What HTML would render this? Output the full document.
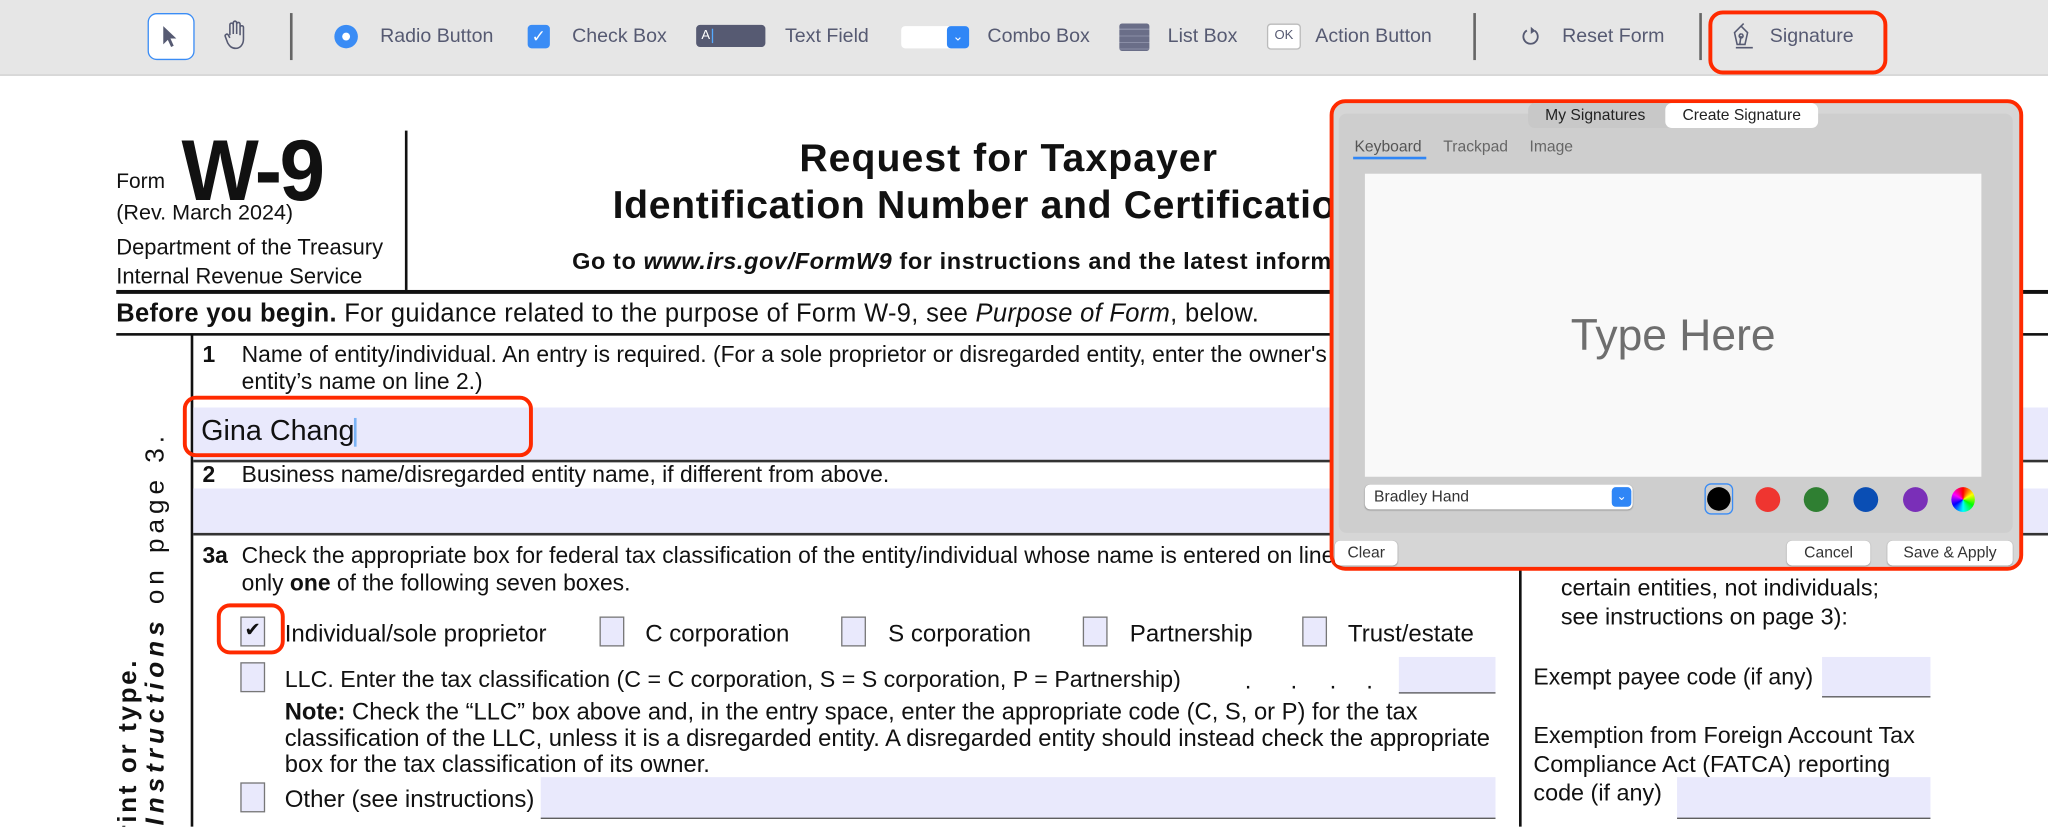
<!DOCTYPE html>
<html><head><meta charset="utf-8"><style>
html,body{margin:0;padding:0;width:2048px;height:826px;overflow:hidden;background:#fff}
#w{position:absolute;left:0;top:0;width:1568px;height:633px;overflow:hidden;transform:scale(1.30612);transform-origin:0 0;font-family:"Liberation Sans",Arial,sans-serif;color:#111}
.a{position:absolute;white-space:nowrap}
.tb{color:#565a72;font-size:15px}
.f{font-size:17.5px;color:#111}
.g{font-size:18.4px}
.r{font-size:17.9px}
.fld{position:absolute;background:#e9e9fc}
.cb{position:absolute;width:19px;height:23px;background:#e9e9fc;border:1.5px solid #777;box-sizing:border-box}
.dot{position:absolute;width:19px;height:19px;border-radius:50%}
.btn{position:absolute;background:#fff;border-radius:4px;font-size:12px;color:#333;text-align:center;line-height:19px;height:19px;box-shadow:0 0.5px 1px rgba(0,0,0,.25)}
</style></head><body><div id="w">
<!-- toolbar -->
<div class="a" style="left:0;top:0;width:1568px;height:57px;background:#e6e6e6;border-bottom:1px solid #cfcfcf"></div>
<div class="a" style="left:113px;top:10px;width:34px;height:34px;background:#fff;border:1.5px solid #3a8cf5;border-radius:7px"></div>
<svg class="a" style="left:122px;top:18px" width="16" height="20" viewBox="0 0 16 20"><path d="M3 2 L3 16 L6.5 12.5 L9 18 L11 17 L8.5 11.5 L13 11.5 Z" fill="#565a72"/></svg>
<svg class="a" style="left:171px;top:15px" width="18" height="24" viewBox="0 0 18 24"><path d="M5 12 V4 a1.3 1.3 0 0 1 2.6 0 V11 V2.5 a1.3 1.3 0 0 1 2.6 0 V11 V3.5 a1.3 1.3 0 0 1 2.6 0 V12 V6 a1.3 1.3 0 0 1 2.6 0 V15 c0 4-2.5 7-6 7 c-3 0-4.5-1.5-6-4 L1.5 13 a1.3 1.3 0 0 1 2.3-1.2 L5 14" fill="none" stroke="#565a72" stroke-width="1.2"/></svg>
<div class="a" style="left:222px;top:10px;width:1.5px;height:36px;background:#666"></div>
<div class="a" style="left:256px;top:19px;width:18px;height:18px;border-radius:50%;background:#3a8cf5"></div>
<div class="a" style="left:262px;top:25px;width:6px;height:6px;border-radius:50%;background:#fff"></div>
<div class="a tb" style="left:291px;top:19px">Radio Button</div>
<div class="a" style="left:404px;top:19px;width:17px;height:18px;border-radius:3px;background:#3a8cf5;color:#fff;font-size:13px;text-align:center;line-height:18px">✓</div>
<div class="a tb" style="left:438px;top:19px">Check Box</div>
<div class="a" style="left:533px;top:19px;width:53px;height:17px;border-radius:3px;background:#565a72;color:#fff;font-size:10px;line-height:17px;padding-left:4px;box-sizing:border-box">A<span style="display:inline-block;width:1px;height:11px;background:#5af;vertical-align:middle;margin-left:1px"></span></div>
<div class="a tb" style="left:601px;top:19px">Text Field</div>
<div class="a" style="left:690px;top:20px;width:52px;height:17px;border-radius:3px;background:#fff"></div>
<div class="a" style="left:725px;top:20px;width:17px;height:17px;border-radius:3px;background:#2f86f6;color:#fff;font-size:10px;text-align:center;line-height:17px">⌄</div>
<div class="a tb" style="left:756px;top:19px">Combo Box</div>
<div class="a" style="left:857px;top:18px;width:23px;height:21px;border-radius:2px;background:repeating-linear-gradient(#6a6e88 0,#6a6e88 4px,#8a8ea6 4px,#8a8ea6 5px)"></div>
<div class="a tb" style="left:894px;top:19px">List Box</div>
<div class="a" style="left:970px;top:18px;width:24px;height:18px;border:1px solid #bbb;border-radius:3px;background:#fff;font-size:10px;color:#565a72;text-align:center;line-height:18px">OK</div>
<div class="a tb" style="left:1007px;top:19px">Action Button</div>
<div class="a" style="left:1128px;top:10px;width:1.5px;height:36px;background:#666"></div>
<svg class="a" style="left:1163px;top:19px" width="18" height="18" viewBox="0 0 18 18"><path d="M12 4.5 A5.5 5.5 0 1 1 6 4.3" fill="none" stroke="#565a72" stroke-width="1.4"/><path d="M9 1.5 L12.5 4.5 L9 7 Z" fill="#565a72"/></svg>
<div class="a tb" style="left:1196px;top:19px">Reset Form</div>
<div class="a" style="left:1301px;top:10px;width:1.5px;height:36px;background:#666"></div>
<div class="a" style="left:1308px;top:8px;width:131px;height:43px;border:3px solid #ff2a00;border-radius:11px"></div>
<svg class="a" style="left:1324px;top:17px" width="20" height="22" viewBox="0 0 20 22"><path d="M6 17 L4 8 L9 3 L14 8 L12 17 Z M9 3 L11 1 M9 9 a1.5 1.5 0 1 0 0.1 0 M9 10.5 L8 17 M5 19.5 H18" fill="none" stroke="#565a72" stroke-width="1.2"/></svg>
<div class="a tb" style="left:1355px;top:19px">Signature</div>

<!-- form header -->
<div class="a" style="left:89px;top:131px;font-size:16px">Form</div>
<div class="a" style="left:139px;top:92px;font-size:66px;font-weight:bold;letter-spacing:-2px;transform:scaleX(0.95);transform-origin:0 0">W-9</div>
<div class="a" style="left:89px;top:154px;font-size:16.5px">(Rev. March 2024)</div>
<div class="a" style="left:89px;top:180px;font-size:16.8px">Department of the Treasury</div>
<div class="a" style="left:89px;top:202px;font-size:16.8px">Internal Revenue Service</div>
<div class="a" style="left:310px;top:100px;width:2px;height:122px;background:#111"></div>
<div class="a" style="left:612px;top:105px;font-size:30px;font-weight:bold;letter-spacing:0.8px">Request for Taxpayer</div>
<div class="a" style="left:469px;top:141px;font-size:30px;font-weight:bold;letter-spacing:0.5px">Identification Number and Certification</div>
<div class="a" style="left:438px;top:190px;font-size:18px;font-weight:bold;letter-spacing:0.45px">Go to <i>www.irs.gov/FormW9</i> for instructions and the latest information.</div>
<div class="a" style="left:89px;top:222px;width:1479px;height:2.5px;background:#111"></div>
<div class="a" style="left:89px;top:229px;font-size:19.5px;letter-spacing:0.25px"><b>Before you begin.</b> For guidance related to the purpose of Form W-9, see <i>Purpose of Form</i>, below.</div>
<div class="a" style="left:89px;top:255px;width:1479px;height:1.5px;background:#111"></div>
<div class="a" style="left:146px;top:256px;width:1.5px;height:377px;background:#111"></div>

<div class="a f" style="left:155px;top:261px"><b>1</b></div>
<div class="a f" style="left:185px;top:261px">Name of entity/individual. An entry is required. (For a sole proprietor or disregarded entity, enter the owner's name on line 1, and enter the business/disregarded</div>
<div class="a f" style="left:185px;top:282px">entity’s name on line 2.)</div>
<div class="fld" style="left:148px;top:312px;width:1420px;height:40px"></div>
<div class="a" style="left:154px;top:317px;font-size:22px">Gina Chang<span style="display:inline-block;width:2px;height:22px;background:#7ab3f5;vertical-align:middle"></span></div>
<div class="a" style="left:140px;top:303px;width:262px;height:41px;border:3px solid #ff2a00;border-radius:10px"></div>
<div class="a" style="left:148px;top:352px;width:1420px;height:1.5px;background:#333"></div>
<div class="a f" style="left:155px;top:353px"><b>2</b></div>
<div class="a f" style="left:185px;top:353px">Business name/disregarded entity name, if different from above.</div>
<div class="fld" style="left:148px;top:374px;width:1420px;height:34px"></div>
<div class="a" style="left:148px;top:408px;width:1420px;height:1.5px;background:#333"></div>

<div class="a f" style="left:155px;top:415px"><b>3a</b></div>
<div class="a f" style="left:185px;top:415px">Check the appropriate box for federal tax classification of the entity/individual whose name is entered on line 1. Check</div>
<div class="a f" style="left:185px;top:436px">only <b>one</b> of the following seven boxes.</div>
<div class="cb" style="left:184px;top:472px;text-align:center;font-size:15px;line-height:20px">✔</div>
<div class="a" style="left:166px;top:462px;width:52px;height:39px;border:3px solid #ff2a00;border-radius:10px;box-sizing:border-box"></div>
<div class="a f g" style="left:218px;top:474px">Individual/sole proprietor</div>
<div class="cb" style="left:459px;top:472px"></div><div class="a f g" style="left:494px;top:474px">C corporation</div>
<div class="cb" style="left:644px;top:472px"></div><div class="a f g" style="left:680px;top:474px">S corporation</div>
<div class="cb" style="left:829px;top:472px"></div><div class="a f g" style="left:865px;top:474px">Partnership</div>
<div class="cb" style="left:997px;top:472px"></div><div class="a f g" style="left:1032px;top:474px">Trust/estate</div>
<div class="a" style="left:1163px;top:409px;width:1.5px;height:224px;background:#111"></div>

<div class="cb" style="left:184px;top:507px"></div>
<div class="a f" style="left:218px;top:510px;font-size:17.8px">LLC. Enter the tax classification (C = C corporation, S = S corporation, P = Partnership)</div>
<div class="a f g" style="left:953px;top:510px">.</div><div class="a f g" style="left:988px;top:510px">.</div><div class="a f g" style="left:1018px;top:510px">.</div><div class="a f g" style="left:1046px;top:510px">.</div>
<div class="fld" style="left:1071px;top:503px;width:74px;height:27px;border-bottom:1.5px solid #555"></div>
<div class="a f" style="left:218px;top:535px;font-size:18.2px"><b>Note:</b> Check the “LLC” box above and, in the entry space, enter the appropriate code (C, S, or P) for the tax</div>
<div class="a f" style="left:218px;top:555px;font-size:18.2px">classification of the LLC, unless it is a disregarded entity. A disregarded entity should instead check the appropriate</div>
<div class="a f" style="left:218px;top:575px;font-size:18.2px">box for the tax classification of its owner.</div>
<div class="cb" style="left:184px;top:599px"></div>
<div class="a f g" style="left:218px;top:601px">Other (see instructions)</div>
<div class="fld" style="left:414px;top:595px;width:731px;height:31px;border-bottom:1.5px solid #555"></div>

<div class="a f r" style="left:1195px;top:440px">certain entities, not individuals;</div>
<div class="a f r" style="left:1195px;top:462px">see instructions on page 3):</div>
<div class="a f" style="left:1174px;top:508px;font-size:17.6px">Exempt payee code (if any)</div>
<div class="fld" style="left:1395px;top:503px;width:83px;height:30px;border-bottom:1.5px solid #555"></div>
<div class="a f r" style="left:1174px;top:553px">Exemption from Foreign Account Tax</div>
<div class="a f r" style="left:1174px;top:575px">Compliance Act (FATCA) reporting</div>
<div class="a f r" style="left:1174px;top:597px">code (if any)</div>
<div class="fld" style="left:1284px;top:595px;width:194px;height:31px;border-bottom:1.5px solid #555"></div>

<div class="a" style="left:87px;top:655px;font-size:20px;font-weight:bold;letter-spacing:2px;transform:rotate(-90deg);transform-origin:0 0">Print or type.</div>
<div class="a" style="left:108px;top:632px;font-size:20px;letter-spacing:3.8px;transform:rotate(-90deg);transform-origin:0 0"><b><i>Instructions</i></b> on page 3.</div>

<!-- dialog -->
<div class="a" style="left:1018px;top:76px;width:531px;height:361px;background:#d6d6d6;border:3px solid #ff2a00;border-radius:12px;box-sizing:border-box"></div>
<div class="a" style="left:1025px;top:87px;width:516px;height:321px;background:#cecece;border-radius:6px"></div>
<div class="a" style="left:1170px;top:79px;width:222px;height:19px;background:#c8c8c8;border-radius:5px"></div>
<div class="a" style="left:1183px;top:81px;font-size:12px;color:#222">My Signatures</div>
<div class="a" style="left:1275px;top:79px;width:117px;height:19px;background:#fff;border-radius:5px;font-size:12px;color:#222;text-align:center;line-height:19px">Create Signature</div>
<div class="a" style="left:1037px;top:105px;font-size:12px;color:#555">Keyboard</div>
<div class="a" style="left:1036px;top:120px;width:56px;height:2px;background:#2f86f6"></div>
<div class="a" style="left:1105px;top:105px;font-size:12px;color:#666">Trackpad</div>
<div class="a" style="left:1171px;top:105px;font-size:12px;color:#666">Image</div>
<div class="a" style="left:1045px;top:133px;width:472px;height:232px;background:#f9f9f9"></div>
<div class="a" style="left:1045px;top:238px;width:472px;text-align:center;font-size:34px;color:#6e6e6e">Type Here</div>
<div class="a" style="left:1045px;top:371px;width:205px;height:19px;background:#fff;border-radius:4px;box-shadow:0 0.5px 1px rgba(0,0,0,.25)"></div>
<div class="a" style="left:1052px;top:373px;font-size:12px;color:#333">Bradley Hand</div>
<div class="a" style="left:1234px;top:373px;width:15px;height:15px;background:#2f86f6;border-radius:3px;color:#fff;font-size:9px;text-align:center;line-height:14px">⌄</div>
<div class="a" style="left:1305px;top:370px;width:22px;height:24px;border:1.5px solid #3a8cf5;border-radius:5px;box-sizing:border-box"></div>
<div class="dot" style="left:1307px;top:373px;width:18px;height:18px;background:#000"></div>
<div class="dot" style="left:1344px;top:373px;background:#ef3530"></div>
<div class="dot" style="left:1381px;top:373px;background:#2f7f32"></div>
<div class="dot" style="left:1419px;top:373px;background:#0a4eb4"></div>
<div class="dot" style="left:1457px;top:373px;background:#7a2fb8"></div>
<div class="dot" style="left:1494px;top:373px;width:18px;background:conic-gradient(red,yellow,lime,cyan,blue,magenta,red)"></div>
<div class="btn" style="left:1022px;top:414px;width:48px">Clear</div>
<div class="btn" style="left:1368px;top:414px;width:64px">Cancel</div>
<div class="btn" style="left:1445px;top:414px;width:96px">Save &amp; Apply</div>
</div></body></html>
